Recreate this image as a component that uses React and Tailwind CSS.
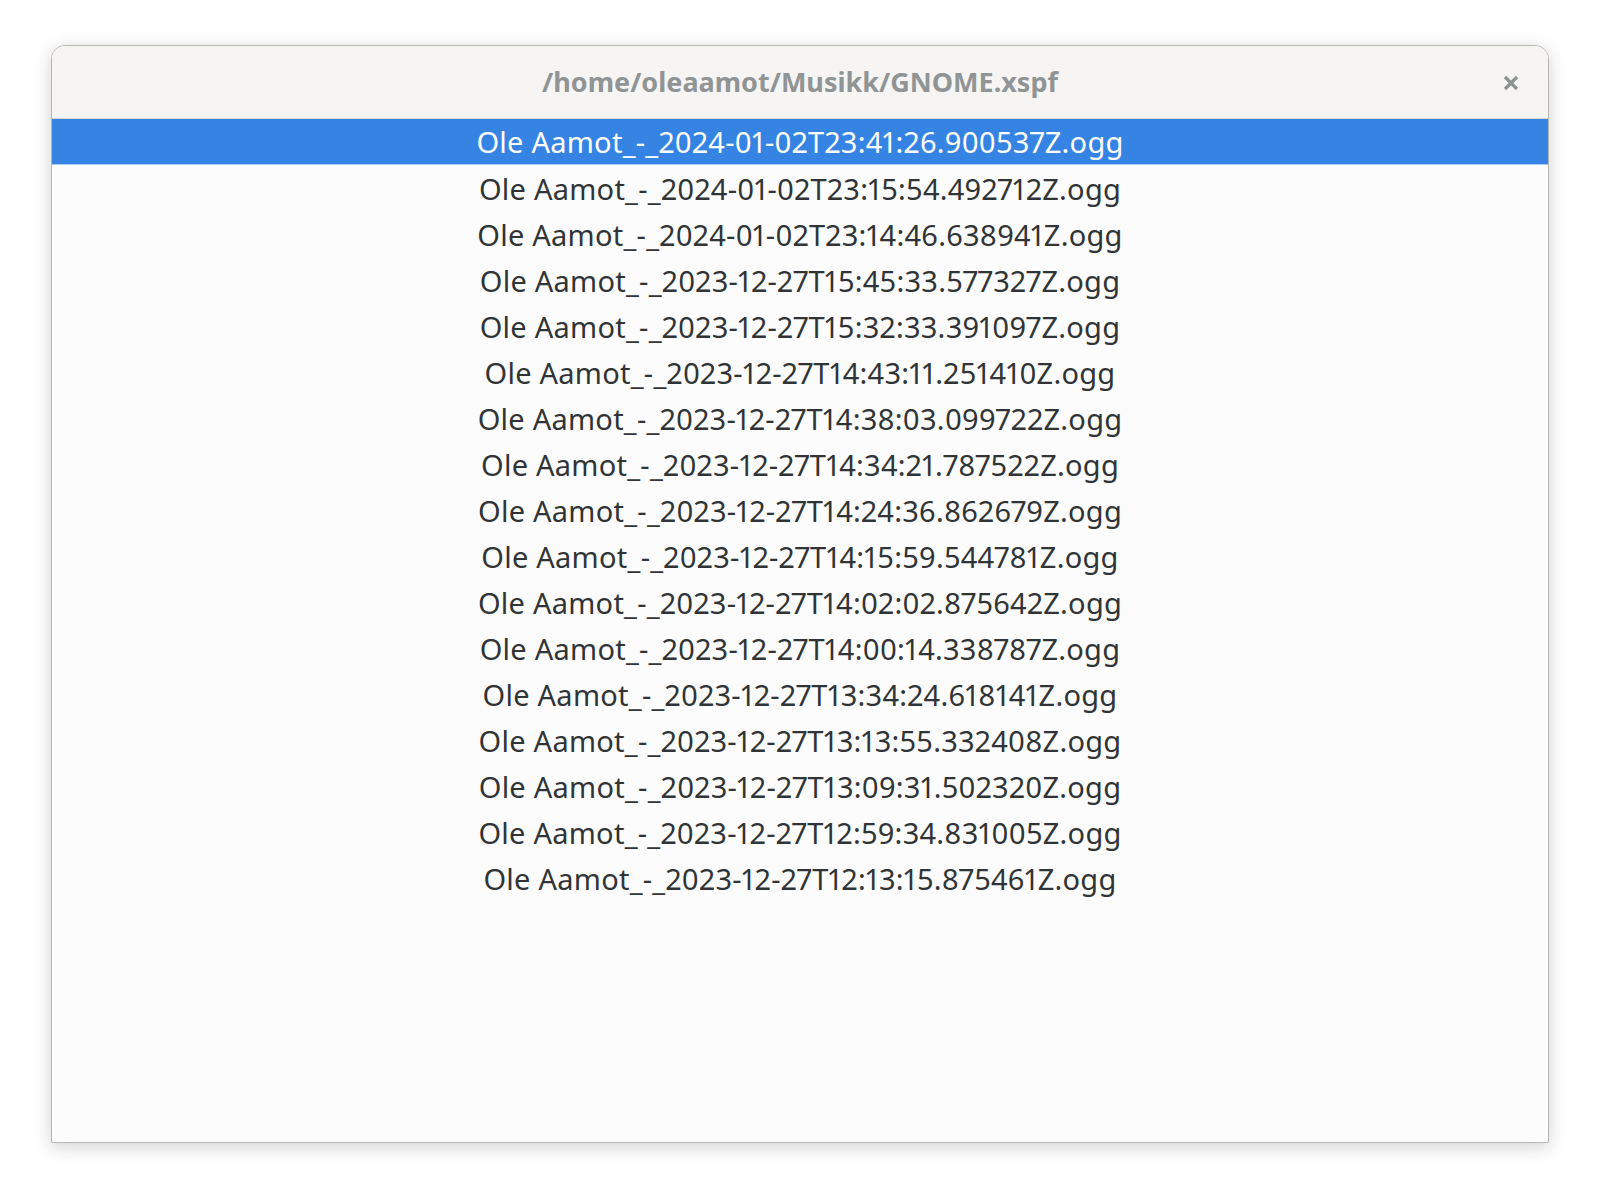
import React from "react";

const files = [
  "Ole Aamot_-_2024-01-02T23:41:26.900537Z.ogg",
  "Ole Aamot_-_2024-01-02T23:15:54.492712Z.ogg",
  "Ole Aamot_-_2024-01-02T23:14:46.638941Z.ogg",
  "Ole Aamot_-_2023-12-27T15:45:33.577327Z.ogg",
  "Ole Aamot_-_2023-12-27T15:32:33.391097Z.ogg",
  "Ole Aamot_-_2023-12-27T14:43:11.251410Z.ogg",
  "Ole Aamot_-_2023-12-27T14:38:03.099722Z.ogg",
  "Ole Aamot_-_2023-12-27T14:34:21.787522Z.ogg",
  "Ole Aamot_-_2023-12-27T14:24:36.862679Z.ogg",
  "Ole Aamot_-_2023-12-27T14:15:59.544781Z.ogg",
  "Ole Aamot_-_2023-12-27T14:02:02.875642Z.ogg",
  "Ole Aamot_-_2023-12-27T14:00:14.338787Z.ogg",
  "Ole Aamot_-_2023-12-27T13:34:24.618141Z.ogg",
  "Ole Aamot_-_2023-12-27T13:13:55.332408Z.ogg",
  "Ole Aamot_-_2023-12-27T13:09:31.502320Z.ogg",
  "Ole Aamot_-_2023-12-27T12:59:34.831005Z.ogg",
  "Ole Aamot_-_2023-12-27T12:13:15.875461Z.ogg",
];

export default function App() {
  return (
    <div
      className="w-[1600px] h-[1200px] bg-white pt-[45px] pl-[51px]"
      style={{ fontFamily: '"Noto Sans", "Open Sans", sans-serif' }}
    >
      <div className="w-[1498px] h-[1098px] flex flex-col rounded-t-[14px] border border-[#b6b6b3] bg-[#fcfcfc] shadow-[0_4px_18px_rgba(0,0,0,0.18)] overflow-hidden">
        <div className="relative h-[73px] shrink-0 bg-[#f6f5f4] border-b border-[#d8d4d0] flex items-center justify-center">
          <span className="text-[27px] font-bold text-[#919494]">
            /home/oleaamot/Musikk/GNOME.xspf
          </span>
          <button className="absolute right-[28px] top-[28px] w-[18px] h-[18px] flex items-center justify-center">
            <svg width="16" height="16" viewBox="0 0 16 16">
              <path d="M2 2 L14 14 M14 2 L2 14" stroke="#8e9192" strokeWidth="3.2" strokeLinecap="butt" />
            </svg>
          </button>
        </div>
        <div className="flex flex-col proportional-nums tracking-[0.25px]">
          {files.map((f, i) => (
            <div
              key={f}
              className={
                i === 0
                  ? "h-[46px] pt-[1px] flex items-center justify-center bg-[#3584e4] text-white border-b border-[#a9c9f0] text-[29px]"
                  : "h-[46px] pt-[1px] flex items-center justify-center text-[#303436] text-[29px]"
              }
            >
              {f}
            </div>
          ))}
        </div>
      </div>
    </div>
  );
}
